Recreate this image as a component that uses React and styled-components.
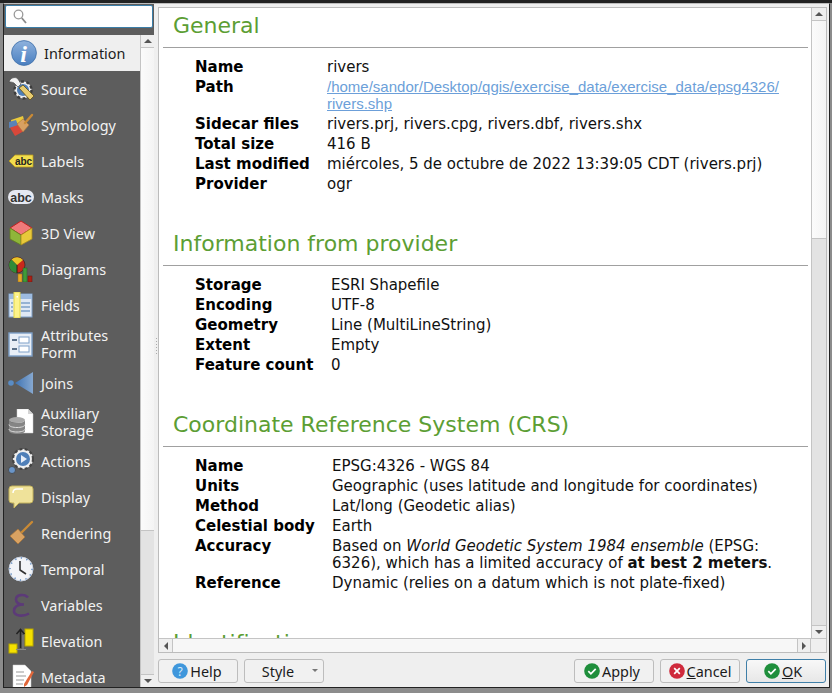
import React from "react";
import styled, { createGlobalStyle } from "styled-components";

const UI_FONT = `"Noto Sans", "Open Sans", sans-serif`;
const BODY_FONT = `"DejaVu Sans", sans-serif`;

const GlobalStyle = createGlobalStyle`
  html, body {
    margin: 0;
    padding: 0;
    width: 832px;
    height: 693px;
    overflow: hidden;
    background: #8c8c8c;
  }
  * { box-sizing: border-box; }
`;

const Desktop = styled.div`
  width: 832px;
  height: 693px;
  background: #8c8c8c;
  display: flex;
  flex-direction: column;
`;

const TitleEdge = styled.div`
  height: 3px;
  background: #222;
  flex: none;
`;

const Dialog = styled.div`
  width: 827px;
  height: 685px;
  margin-left: 3px;
  background: #efefef;
  border-left: 1px solid #222;
  border-right: 1px solid #222;
  border-bottom: 1px solid #222;
  border-top: 1px solid #bdbdbd;
  display: flex;
  font-family: ${UI_FONT};
`;

const LeftColumn = styled.div`
  width: 150px;
  flex: none;
  background: #5d5d5d;
  display: flex;
  flex-direction: column;
`;

const SearchBox = styled.div`
  height: 23px;
  margin: 1px 0 7px 1px;
  width: 148px;
  background: #fff;
  border: 1px solid #3b7ea8;
  border-radius: 2px;
  display: flex;
  align-items: center;
  padding-left: 7px;
  flex: none;
`;

const ListRow = styled.div`
  flex: 1;
  min-height: 0;
  display: flex;
`;

const PageList = styled.div`
  width: 136px;
  flex: none;
  overflow: hidden;
  background: #5d5d5d;
`;

const PageItem = styled.div`
  height: ${(p) => (p.$tall ? 42 : 36)}px;
  display: flex;
  align-items: center;
  padding-left: ${(p) => (p.$active ? 7 : 4)}px;
  gap: 7px;
  background: ${(p) => (p.$active ? "#efefef" : "transparent")};
  color: ${(p) => (p.$active ? "#1d1d1d" : "#f2f2f2")};
  font-size: 14.4px;
  line-height: 17px;
`;

const VScroll = styled.div`
  width: ${(p) => (p.$framed ? 15 : 14)}px;
  flex: none;
  display: flex;
  flex-direction: column;
  background: #e3e3e3;
  border-left: 1px solid #c4c4c4;
`;

const HScroll = styled.div`
  flex: 1;
  display: flex;
  background: #f7f7f7;
`;

const ScrollButton = styled.div`
  flex: none;
  width: ${(p) => (p.$horizontal ? "14px" : "auto")};
  height: ${(p) => (p.$horizontal ? "auto" : "13px")};
  background: #efefef;
  border-style: solid;
  border-color: #c4c4c4;
  border-width: ${(p) =>
    p.$horizontal
      ? p.$end ? "0 1px 0 1px" : "0 1px 0 0"
      : p.$end ? "1px 0 0 0" : "0 0 1px 0"};
  display: flex;
  align-items: center;
  justify-content: center;
`;

const Arrow = styled.span`
  width: 0;
  height: 0;
  border-style: solid;
  border-color: transparent;
  ${(p) => p.$dir === "up" && "border-width: 0 4px 4px 4px; border-bottom-color: #555;"}
  ${(p) => p.$dir === "down" && "border-width: 4px 4px 0 4px; border-top-color: #555;"}
  ${(p) => p.$dir === "left" && "border-width: 4px 4px 4px 0; border-right-color: #555;"}
  ${(p) => p.$dir === "right" && "border-width: 4px 0 4px 4px; border-left-color: #555;"}
`;

const VThumb = styled.div`
  height: ${(p) => p.$size}px;
  flex: none;
  background: linear-gradient(90deg, #fbfbfb, #f4f4f4);
  border-bottom: 1px solid #c4c4c4;
`;

const Trough = styled.div`
  flex: 1;
`;

const Splitter = styled.div`
  width: 4px;
  flex: none;
  display: flex;
  align-items: center;
  justify-content: center;
`;

const SplitDots = styled.div`
  width: 1px;
  height: 16px;
  background: repeating-linear-gradient(180deg, #aaa 0 1px, transparent 1px 3px);
`;

const RightColumn = styled.div`
  flex: 1;
  min-width: 0;
  padding: 3px 2px 0 0;
  display: flex;
  flex-direction: column;
`;

const ContentFrame = styled.div`
  height: 646px;
  flex: none;
  border: 1px solid #bcbcbc;
  display: flex;
  flex-direction: column;
  background: #fff;
`;

const ContentRow = styled.div`
  flex: 1;
  min-height: 0;
  display: flex;
`;

const Viewport = styled.div`
  flex: 1;
  min-width: 0;
  overflow: hidden;
  background: #fff;
  padding: 5px 3px 0 4px;
`;

const BottomBar = styled.div`
  height: 14px;
  flex: none;
  display: flex;
  border-top: 1px solid #c4c4c4;
`;

const Corner = styled.div`
  width: 15px;
  flex: none;
  background: #efefef;
`;

const SectionTitle = styled.h2`
  margin: ${(p) => p.$gap}px 0 0 0;
  padding: 0 0 8px 10px;
  font: 400 22px/26px ${BODY_FONT};
  color: #5c9e34;
  border-bottom: 1px solid #a0a0a0;
`;

const MetaTable = styled.div`
  display: grid;
  grid-template-columns: ${(p) => p.$keyWidth}px 1fr;
  padding: 11px 30px 0 32px;
  row-gap: 3px;
  font: 400 15px/17px ${BODY_FONT};
  color: #111;
`;

const MetaKey = styled.div`
  font-weight: 700;
  color: #000;
`;

const MetaValue = styled.div``;

const PathLink = styled.a`
  display: block;
  margin: -1px 0 1px;
  font-family: "Liberation Sans", Arial, sans-serif;
  color: #6c9fd9;
  text-decoration: underline;
  font-size: 15px;
  line-height: 17px;
`;

const ButtonRow = styled.div`
  display: flex;
  align-items: center;
  gap: 6px;
  padding: 6px 1px 0 0;
  height: 30px;
`;

const DialogButton = styled.div`
  width: 80px;
  height: 24px;
  position: relative;
  display: flex;
  align-items: center;
  justify-content: center;
  gap: 2px;
  padding-right: ${(p) => p.$inset || 0}px;
  font-size: 14.4px;
  color: #1b1b1b;
  border: 1px solid ${(p) => (p.$primary ? "#3f7fa8" : "#bdbdbd")};
  border-radius: 3px;
  background: ${(p) => (p.$primary ? "linear-gradient(#f8f8f8, #e7e7e7)" : "#f1f1f1")};
`;

const MenuCaret = styled.span`
  position: absolute;
  right: 5px;
  top: 9px;
  width: 0;
  height: 0;
  border-style: solid;
  border-width: 3px 3px 0 3px;
  border-color: #777 transparent transparent transparent;
`;

const Spacer = styled.div`
  flex: 1;
`;

const Mnemonic = styled.span`
  text-decoration: underline;
`;

const Icon = ({ size = 26, children }) => (
  <svg width={size} height={size} viewBox="0 0 26 26" style={{ flex: "none" }}>
    {children}
  </svg>
);

const InfoIcon = () => (
  <Icon>
    <defs>
      <linearGradient id="infoG" x1="0" y1="0" x2="0" y2="1">
        <stop offset="0" stopColor="#8fb2dd" />
        <stop offset="1" stopColor="#4a7fc0" />
      </linearGradient>
    </defs>
    <circle cx="13" cy="13" r="12.4" fill="url(#infoG)" stroke="#3f6ea8" strokeWidth="0.8" />
    <text x="12.5" y="22" textAnchor="middle" fontFamily="Liberation Serif" fontStyle="italic" fontWeight="700" fontSize="24" fill="#fff">i</text>
  </Icon>
);

const SourceIcon = () => (
  <Icon>
    <circle cx="15" cy="14" r="8.5" fill="#efefef" stroke="#3d3d3d" strokeWidth="2.4" strokeDasharray="3 2.4" />
    <circle cx="15" cy="14" r="6" fill="#4f7fb8" />
    <path d="M1 6c1-4 6-6 9-3l3 5-3 3-4-4c-2-1-3-1-5-1z" fill="#f2f2f2" stroke="#4a4a4a" strokeWidth="0.7" />
    <path d="M11 12l4-3 11 11-4 4z" fill="#e8cc70" stroke="#5c4c18" strokeWidth="0.8" />
  </Icon>
);

const SymbologyIcon = () => (
  <Icon>
    <path d="M3 8l12-4 2 8-13 6z" fill="#e9c93c" />
    <path d="M1 14l10-3 5 8-9 5z" fill="#d8483a" />
    <path d="M1 10l7-2 2 5-9 3z" fill="#5a83b8" />
    <path d="M9 12l6-5 6 6-6 7z" fill="#d7a062" stroke="#a9743a" strokeWidth="0.6" />
    <path d="M17 11l7-8" stroke="#c98a35" strokeWidth="2.4" strokeLinecap="round" />
  </Icon>
);

const LabelsIcon = () => (
  <Icon>
    <path d="M1 13l6-6h18v12H7z" fill="#f3de4e" stroke="#b79a1e" strokeWidth="0.8" />
    <text x="15.5" y="16.5" textAnchor="middle" fontFamily="Liberation Sans" fontWeight="700" fontSize="10" fill="#222">abc</text>
  </Icon>
);

const MasksIcon = () => (
  <Icon>
    <rect x="0" y="6" width="26" height="14" rx="7" fill="#e6e9f2" />
    <text x="13" y="17.5" textAnchor="middle" fontFamily="Liberation Sans" fontWeight="700" fontSize="12.5" fill="#333">abc</text>
  </Icon>
);

const CubeIcon = () => (
  <Icon>
    <path d="M13 1l11 7-11 7L2 8z" fill="#f07a7a" stroke="#c02020" strokeWidth="1" />
    <path d="M2 8l11 7v10L2 19z" fill="#8fb53a" stroke="#5f7f1f" strokeWidth="0.8" />
    <path d="M24 8l-11 7v10l11-6z" fill="#e8c93a" stroke="#a88c1e" strokeWidth="0.8" />
  </Icon>
);

const DiagramsIcon = () => (
  <Icon>
    <circle cx="9" cy="9" r="8" fill="#c9281c" stroke="#222" strokeWidth="0.6" />
    <path d="M9 9L3.5 3.5A8 8 0 0 1 15 4z" fill="#e8c428" />
    <path d="M9 9v8a8 8 0 0 1-8-8c0-2 1-4 2.5-5.5z" fill="#2f8a38" />
    <path d="M9 9V17" stroke="#111" strokeWidth="0.8" />
    <rect x="10" y="18" width="4" height="8" fill="#e8a828" stroke="#9a6f12" strokeWidth="0.5" />
    <rect x="15" y="12" width="4" height="14" fill="#3f9a3a" stroke="#246322" strokeWidth="0.5" />
    <rect x="20" y="20" width="4" height="6" fill="#a82216" stroke="#6e130b" strokeWidth="0.5" />
  </Icon>
);

const FieldsIcon = () => (
  <Icon>
    <rect x="1" y="2" width="23" height="23" fill="#dfe8f4" stroke="#7ea0c8" />
    <rect x="1" y="2" width="23" height="5" fill="#9dbbe0" />
    <path d="M13 11h9M13 15h9M13 19h9M3 11h2M3 15h2M3 19h2" stroke="#7ea0c8" strokeWidth="1.5" />
    <rect x="6" y="0" width="6" height="26" fill="#fdf38a" stroke="#e4d64a" />
    <rect x="8.5" y="4" width="1.5" height="1.5" fill="#fff" />
  </Icon>
);

const FormIcon = () => (
  <Icon>
    <rect x="1" y="2" width="23" height="23" fill="#e8eef6" stroke="#7ea0c8" strokeWidth="1.4" />
    <rect x="11" y="6" width="10" height="6" fill="#fff" stroke="#7ea0c8" />
    <rect x="11" y="15" width="10" height="6" fill="#fff" stroke="#7ea0c8" />
    <path d="M4 9h5M4 18h5" stroke="#5a6f88" strokeWidth="1.8" />
  </Icon>
);

const JoinsIcon = () => (
  <Icon>
    <defs>
      <linearGradient id="joinG" x1="0" y1="0" x2="1" y2="0">
        <stop offset="0" stopColor="#3f74b4" />
        <stop offset="1" stopColor="#86a8d0" />
      </linearGradient>
    </defs>
    <path d="M7 13L25 2v22z" fill="url(#joinG)" />
    <circle cx="3" cy="13" r="2.8" fill="#5a8cc4" />
  </Icon>
);

const AuxIcon = () => (
  <Icon>
    <path d="M9 0h11l5 5v19H9z" fill="#fff" stroke="#ccc" strokeWidth="0.5" />
    <path d="M20 0v5h5" fill="#d5d5d5" />
    <ellipse cx="9" cy="11" rx="8" ry="3" fill="#a8a8a8" />
    <path d="M1 11v11c0 2 4 3 8 3s8-1 8-3V11c0 2-4 3-8 3s-8-1-8-3z" fill="#858585" />
    <path d="M1 15.5c0 2 4 3 8 3s8-1 8-3M1 20c0 2 4 3 8 3s8-1 8-3" stroke="#ddd" fill="none" />
  </Icon>
);

const ActionsIcon = () => (
  <Icon>
    <circle cx="15" cy="11" r="10" fill="#efefef" stroke="#444" strokeWidth="2.2" strokeDasharray="3 2.4" />
    <circle cx="15" cy="11" r="7" fill="#4f7fb8" />
    <path d="M13 7l6 4-6 4z" fill="#e8eef8" />
    <circle cx="4" cy="22" r="3.5" fill="#6a95c8" stroke="#444" strokeWidth="0.8" />
  </Icon>
);

const DisplayIcon = () => (
  <Icon>
    <path d="M4 2h18a3 3 0 0 1 3 3v11a3 3 0 0 1-3 3H11l-5 5v-5H4a3 3 0 0 1-3-3V5a3 3 0 0 1 3-3z" fill="#efe29a" stroke="#c4b35c" />
    <path d="M5 9c0-2 1-4 4-4h6" stroke="#fff" strokeWidth="1.5" fill="none" />
  </Icon>
);

const RenderingIcon = () => (
  <Icon>
    <path d="M2 16l8-7 7 8-7 7z" fill="#d9a262" stroke="#a8743a" strokeWidth="0.7" />
    <path d="M14 12L24 2" stroke="#c98a35" strokeWidth="2.4" strokeLinecap="round" />
  </Icon>
);

const TemporalIcon = () => (
  <Icon>
    <circle cx="13" cy="13" r="12" fill="#f3f4f7" stroke="#c9d3e2" />
    <circle cx="13" cy="13" r="11" fill="none" stroke="#5a86bd" strokeWidth="1.4" strokeDasharray="1.2 4.5" />
    <path d="M12 5v9l6 4" stroke="#333" strokeWidth="1.6" fill="none" />
  </Icon>
);

const VariablesIcon = () => (
  <Icon>
    <path d="M20 5.5C17 2 8 2 8 7.5c0 3 3 5 8 5-6 0-10 2-10 6.5 0 5 9 6 15 2.5" fill="none" stroke="#5c3a78" strokeWidth="2.6" />
  </Icon>
);

const ElevationIcon = () => (
  <Icon>
    <rect x="17" y="1" width="8" height="17" fill="#f5e000" stroke="#b8a800" />
    <rect x="1" y="16" width="8" height="9" fill="#f5e000" stroke="#b8a800" />
    <path d="M12.5 20V2M8.5 6l4-4.5 4 4.5" stroke="#222" strokeWidth="1.5" fill="none" />
    <path d="M15 7v14M8 21.5h10" stroke="#888" strokeWidth="1" />
  </Icon>
);

const MetadataIcon = () => (
  <Icon>
    <path d="M5 1h12l6 6v19H5z" fill="#fff" stroke="#ccc" strokeWidth="0.5" />
    <path d="M8 8h8M8 12h10M8 16h8M8 20h7" stroke="#999" />
    <path d="M16 20L24 7l2 1-7 13-3 2z" fill="#e2673a" />
  </Icon>
);

const SearchIcon = () => (
  <svg width="14" height="15" viewBox="0 0 14 15" style={{ flex: "none" }}>
    <circle cx="5.5" cy="5.5" r="4.3" fill="none" stroke="#9a9a9a" strokeWidth="1.3" />
    <path d="M8.8 9l4.2 5" stroke="#8a8a8a" strokeWidth="1.8" />
  </svg>
);

const HelpIcon = () => (
  <svg width="16" height="16" viewBox="0 0 16 16" style={{ flex: "none" }}>
    <circle cx="8" cy="8" r="7.8" fill="#3f97dc" />
    <text x="8" y="12.5" textAnchor="middle" fontFamily="Noto Sans" fontSize="12" fill="#d8ecfa">?</text>
  </svg>
);

const CheckIcon = () => (
  <svg width="16" height="16" viewBox="0 0 16 16" style={{ flex: "none" }}>
    <circle cx="8" cy="8" r="7.8" fill="#1f8f3c" />
    <path d="M4.3 8.2l2.6 2.6 4.8-5" fill="none" stroke="#fff" strokeWidth="1.7" />
  </svg>
);

const CrossIcon = () => (
  <svg width="16" height="16" viewBox="0 0 16 16" style={{ flex: "none" }}>
    <circle cx="8" cy="8" r="7.8" fill="#cf2a3c" />
    <path d="M5.2 5.2l5.6 5.6M10.8 5.2l-5.6 5.6" fill="none" stroke="#fff" strokeWidth="1.7" />
  </svg>
);

const pages = [
  { label: "Information", icon: InfoIcon, active: true },
  { label: "Source", icon: SourceIcon },
  { label: "Symbology", icon: SymbologyIcon },
  { label: "Labels", icon: LabelsIcon },
  { label: "Masks", icon: MasksIcon },
  { label: "3D View", icon: CubeIcon },
  { label: "Diagrams", icon: DiagramsIcon },
  { label: "Fields", icon: FieldsIcon },
  { label: ["Attributes", "Form"], icon: FormIcon },
  { label: "Joins", icon: JoinsIcon },
  { label: ["Auxiliary", "Storage"], icon: AuxIcon },
  { label: "Actions", icon: ActionsIcon },
  { label: "Display", icon: DisplayIcon },
  { label: "Rendering", icon: RenderingIcon },
  { label: "Temporal", icon: TemporalIcon },
  { label: "Variables", icon: VariablesIcon },
  { label: "Elevation", icon: ElevationIcon },
  { label: "Metadata", icon: MetadataIcon },
];

const providerRows = [
  ["Storage", "ESRI Shapefile"],
  ["Encoding", "UTF-8"],
  ["Geometry", "Line (MultiLineString)"],
  ["Extent", "Empty"],
  ["Feature count", "0"],
];

const App = () => (
  <Desktop>
    <GlobalStyle />
    <TitleEdge />
    <Dialog>
      <LeftColumn>
        <SearchBox>
          <SearchIcon />
        </SearchBox>
        <ListRow>
          <PageList>
            {pages.map((page, index) => {
              const PageIcon = page.icon;
              const lines = Array.isArray(page.label);
              return (
                <PageItem key={index} $active={page.active} $tall={lines}>
                  <PageIcon />
                  <div>
                    {lines ? page.label.map((l) => <div key={l}>{l}</div>) : page.label}
                  </div>
                </PageItem>
              );
            })}
          </PageList>
          <VScroll>
            <ScrollButton><Arrow $dir="up" /></ScrollButton>
            <VThumb $size={483} />
            <Trough />
            <ScrollButton $end><Arrow $dir="down" /></ScrollButton>
          </VScroll>
        </ListRow>
      </LeftColumn>
      <Splitter>
        <SplitDots />
      </Splitter>
      <RightColumn>
        <ContentFrame>
          <ContentRow>
            <Viewport>
              <SectionTitle $gap={0}>General</SectionTitle>
              <MetaTable $keyWidth={132}>
                <MetaKey>Name</MetaKey>
                <MetaValue>rivers</MetaValue>
                <MetaKey>Path</MetaKey>
                <MetaValue>
                  <PathLink>/home/sandor/Desktop/qgis/exercise_data/exercise_data/epsg4326/ rivers.shp</PathLink>
                </MetaValue>
                <MetaKey>Sidecar files</MetaKey>
                <MetaValue>rivers.prj, rivers.cpg, rivers.dbf, rivers.shx</MetaValue>
                <MetaKey>Total size</MetaKey>
                <MetaValue>416 B</MetaValue>
                <MetaKey>Last modified</MetaKey>
                <MetaValue>miércoles, 5 de octubre de 2022 13:39:05 CDT (rivers.prj)</MetaValue>
                <MetaKey>Provider</MetaKey>
                <MetaValue>ogr</MetaValue>
              </MetaTable>

              <SectionTitle $gap={38}>Information from provider</SectionTitle>
              <MetaTable $keyWidth={136}>
                {providerRows.map(([key, value]) => (
                  <React.Fragment key={key}>
                    <MetaKey>{key}</MetaKey>
                    <MetaValue>{value}</MetaValue>
                  </React.Fragment>
                ))}
              </MetaTable>

              <SectionTitle $gap={38}>Coordinate Reference System (CRS)</SectionTitle>
              <MetaTable $keyWidth={137}>
                <MetaKey>Name</MetaKey>
                <MetaValue>EPSG:4326 - WGS 84</MetaValue>
                <MetaKey>Units</MetaKey>
                <MetaValue>Geographic (uses latitude and longitude for coordinates)</MetaValue>
                <MetaKey>Method</MetaKey>
                <MetaValue>Lat/long (Geodetic alias)</MetaValue>
                <MetaKey>Celestial body</MetaKey>
                <MetaValue>Earth</MetaValue>
                <MetaKey>Accuracy</MetaKey>
                <MetaValue>
                  Based on <em>World Geodetic System 1984 ensemble</em> (EPSG: 6326), which has a limited accuracy of <strong>at best 2 meters</strong>.
                </MetaValue>
                <MetaKey>Reference</MetaKey>
                <MetaValue>Dynamic (relies on a datum which is not plate-fixed)</MetaValue>
              </MetaTable>

              <SectionTitle $gap={38}>Identification</SectionTitle>
            </Viewport>
            <VScroll $framed>
              <ScrollButton><Arrow $dir="up" /></ScrollButton>
              <VThumb $size={218} />
              <Trough />
              <ScrollButton $end><Arrow $dir="down" /></ScrollButton>
            </VScroll>
          </ContentRow>
          <BottomBar>
            <ScrollButton $horizontal><Arrow $dir="left" /></ScrollButton>
            <HScroll />
            <ScrollButton $horizontal $end><Arrow $dir="right" /></ScrollButton>
            <Corner />
          </BottomBar>
        </ContentFrame>
        <ButtonRow>
          <DialogButton $inset={2}><HelpIcon />Help</DialogButton>
          <DialogButton $inset={12}>Style<MenuCaret /></DialogButton>
          <Spacer />
          <DialogButton $inset={4}><CheckIcon />Apply</DialogButton>
          <DialogButton><CrossIcon /><span><Mnemonic>C</Mnemonic>ancel</span></DialogButton>
          <DialogButton $primary $inset={6}><CheckIcon /><span><Mnemonic>O</Mnemonic>K</span></DialogButton>
        </ButtonRow>
      </RightColumn>
    </Dialog>
  </Desktop>
);

export default App;
